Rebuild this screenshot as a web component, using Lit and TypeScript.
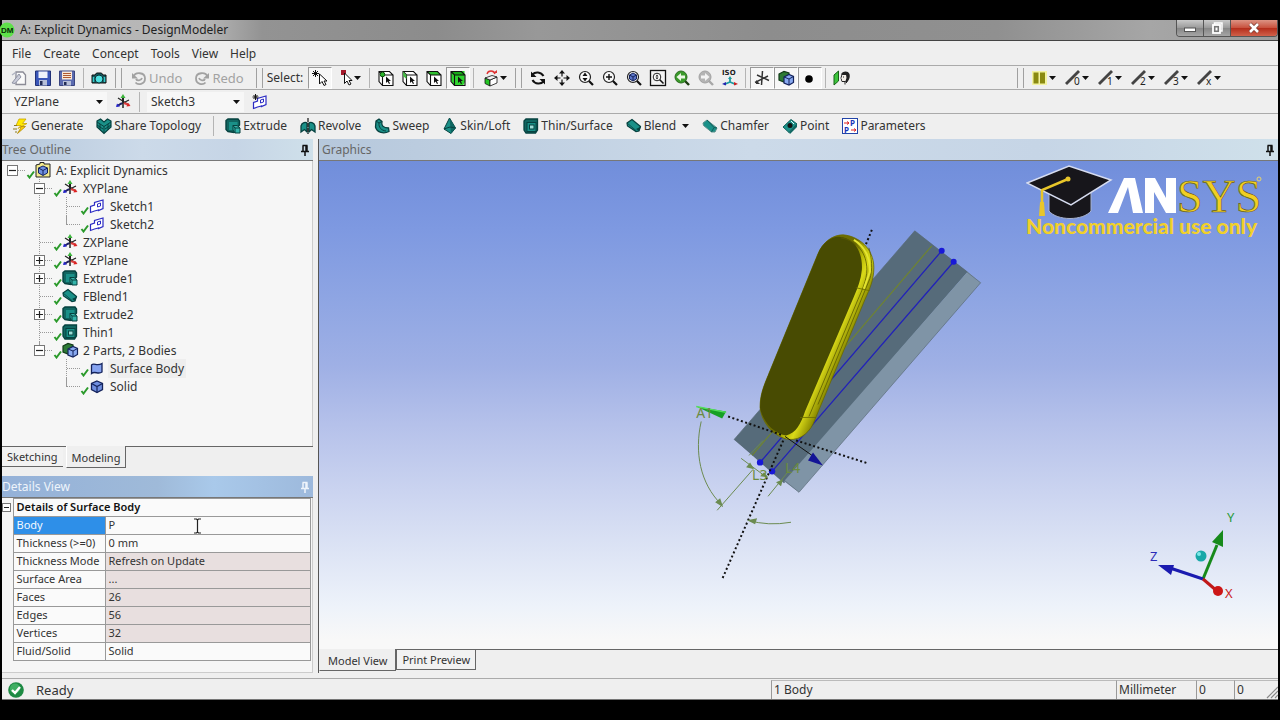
import { LitElement, html, svg, css, nothing } from "lit";
import type { SVGTemplateResult, TemplateResult } from "lit";
import { customElement, state } from "lit/decorators.js";
import { classMap } from "lit/directives/class-map.js";

const T = "#1a9088";
const D = "#06413f";

const sketchShape = svg`<path d="M1.500 14.500V8.500L5.500 7V4.500L14 2V10.500L9.500 12.500V12L5.500 13Z" fill="#fff" stroke="#2b2bc4" stroke-width="1.200"/><path d="M8.500 6L11.500 5V8L8.500 9Z" fill="none" stroke="#2b2bc4"/>`;
const axes = svg`<path d="M3 4L14 11M2 12L14 6" stroke="#222" stroke-width="1.200"/><path d="M8 8.500V3" stroke="#222" stroke-width="2"/><path d="M8 0L10.500 4H5.500Z" fill="#3cb43c"/><path d="M8 8V14" stroke="#222" stroke-width="1.500"/><path d="M9 9L14 11" stroke="#d44" stroke-width="2.200"/><path d="M15.500 12L11.500 12.500L13 9Z" fill="#d22"/><path d="M7 9L3 11.500" stroke="#226" stroke-width="2"/><path d="M1 13L2 9.500L5 12.500Z" fill="#22c"/>`;
const lens = (inner: SVGTemplateResult) => svg`<path d="M10.500 10.500L15 15" stroke="#111" stroke-width="2.200"/><circle cx="7" cy="7" r="5.500" fill="#f8f8f8" stroke="#222" stroke-width="1.200"/>${inner}`;
const wireCube = (extra: SVGTemplateResult, top = "#fff", front = "#fff") => svg`<path d="M1 2L5 1H14.500L15 12L13 15.500H4L1 11Z" fill="${front}"/><path d="M1 1.500L4.500 5H15L11.500 1.500Z" fill="${top}"/><path d="M1 1.500H11.500L15 5V15.500H4.500L1 11.500ZM1 1.500L4.500 5H15M4.500 5V15.500" fill="none" stroke="#111" stroke-width="1.100"/>${extra}<path d="M8 6.500V13L9.600 11.500L11 14L12 13.500L10.800 11H13Z" fill="#111"/>`;
const line = (n: string) => svg`<path d="M1 14L14 1" stroke="#444" stroke-width="2.800"/><text x="9" y="15" font-size="10" font-family="Noto Sans" fill="#222">${n}</text>`;
const blueCube = svg`<path d="M8 3L13.500 5.500V11.500L8 14.500L2.500 11.500V5.500Z" fill="#6f8fe0" stroke="#14235c" stroke-width="1.300"/><path d="M2.500 5.500L8 8.500L13.500 5.500M8 8.500V14.500" fill="none" stroke="#14235c" stroke-width="1.200"/>`;
const blend = svg`<path d="M1 5L6 1.500L14.500 8.500L13 13L10 13.500L1.500 8Z" fill="${T}" stroke="${D}" stroke-width="1.200"/><path d="M1 5L10 12.500" stroke="${D}" stroke-width=".8"/><path d="M13 13L15 8.500L10 11Z" fill="${D}"/>`;

const icons: Record<string, SVGTemplateResult> = {
  axes,
  fresh: svg`<path d="M5 2H12L14.500 5V14.500H5Z" fill="#fafafa" stroke="#8b8b96" stroke-width="1.300"/><path d="M1 13L8 4L10 7L4 13.500Z" fill="#c9cbd8" stroke="#9094a5" stroke-width="1"/><path d="M1 5L4 3L6 5" fill="none" stroke="#b2b5c2" stroke-width="1.500"/>`,
  save: svg`<path d="M.5 1H15.500V15.500H.5Z" fill="#3a56b8" stroke="#223277"/><rect x="3.500" y="1.500" width="9" height="6.500" fill="#eef2fb"/><rect x="4" y="10" width="8" height="5.500" fill="#b6bfd8"/><rect x="5" y="11" width="2.500" height="4" fill="#222c55"/>`,
  saveAs: svg`<path d="M.5 1H15.500V15.500H.5Z" fill="#5b6bb0" stroke="#3a4580"/><rect x="3" y="1.500" width="10" height="8" fill="#fbe9d8"/><path d="M4 3.500H12M4 5.500H12M4 7.500H12" stroke="#b05a32"/><rect x="4" y="11" width="8" height="4.500" fill="#b6bfd8"/><rect x="5" y="12" width="2.500" height="3" fill="#222c55"/>`,
  camera: svg`<path d="M1 5H4L5.500 3H10.500L12 5H15V13H1Z" fill="#14595f" stroke="#111"/><path d="M2.500 7V12M13.500 7V12" stroke="#36c9c9" stroke-width="1.500"/><circle cx="8" cy="9" r="4" fill="#4fe0e0" stroke="#0c3033"/>`,
  undo: svg`<path d="M2.500 7C4 1.500 14 2 14 8.500C14 14.500 7 15.500 4.500 12.500M11 8C10 11 6 11 5 9" fill="none" stroke="#a2a2a2" stroke-width="1.800"/><path d="M1 3V8.500H7Z" fill="#a2a2a2"/>`,
  redo: svg`<path d="M13.500 7C12 1.500 2 2 2 8.500C2 14.500 9 15.500 11.500 12.500M5 8C6 11 10 11 11 9" fill="none" stroke="#a2a2a2" stroke-width="1.800"/><path d="M15 3V8.500H9Z" fill="#a2a2a2"/>`,
  select: svg`<path d="M3.500 0V7M0 3.500H7M1 1L6 6M6 1L1 6" stroke="#111" stroke-width="1"/><path d="M7.500 4V14L10 11.500L12 15.500L14 14.500L12 11H15Z" fill="#fff" stroke="#111"/>`,
  selectBox: svg`<g transform="translate(4 0)"><rect x="0" y="0" width="5" height="5" fill="#a3182a"/><path d="M3.500 3V13.500L6 11L8 15L10 14L8 10.500H11Z" fill="#fff" stroke="#111"/></g>`,
  pickPoint: wireCube(svg`<circle cx="4.500" cy="4.500" r="2.300" fill="#2bb52b" stroke="#0b4e0b"/>`),
  pickEdge: wireCube(svg`<path d="M1 1.500L4.500 5V9L1 6Z" fill="#48b848"/>`),
  pickFace: wireCube(svg``, "#2fc02f"),
  pickBody: wireCube(svg``, "#18a818", "#2fd52f"),
  extend: svg`<path d="M2 8L7 10V16L2 13.500Z" fill="#23c423" stroke="#111" stroke-width=".8"/><path d="M7 10L14 7V13L7 16Z" fill="#fff" stroke="#111" stroke-width=".8"/><path d="M2 8L9 5.500L14 7L7 10Z" fill="#f4f4f4" stroke="#111" stroke-width=".8"/><path d="M4 4C5 0 11 0 12 4" fill="none" stroke="#d33" stroke-width="1.300"/><path d="M10 3H14V0Z" fill="#d33"/>`,
  rotate: svg`<path d="M13.500 6C11 1.500 5 1.500 2.500 4.500M2.500 10C5 14.500 11 14.500 13.500 11.500" fill="none" stroke="#111" stroke-width="2"/><path d="M1 1.500V7H6.500ZM15 14.500V9H9.500Z" fill="#111"/>`,
  pan: svg`<path d="M8 3V6.500M8 9.500V13M3 8H6.500M9.500 8H13" stroke="#111" stroke-width="1.200"/><path d="M8 0L11 3.500H5ZM8 16L5 12.500H11ZM0 8L3.500 5V11ZM16 8L12.500 11V5Z" fill="#111"/>`,
  zoom: lens(svg`<path d="M7 2.500L9.500 6H4.500ZM7 11.500L4.500 8H9.500Z" fill="#111"/>`),
  zoomIn: lens(svg`<path d="M7 4V10M4 7H10" stroke="#111" stroke-width="1.400"/>`),
  zoomFit: lens(svg`<path d="M7 3L10.500 5V9L7 11L3.500 9V5Z" fill="#5a74c8" stroke="#14235c"/><path d="M3.500 5L7 7L10.500 5M7 7V11" fill="none" stroke="#14235c"/>`),
  magnifier: svg`<rect x=".5" y=".5" width="15" height="15" fill="#f4f4f4" stroke="#111" stroke-width="1.300"/><path d="M9.500 9.500L13.500 13.500" stroke="#111" stroke-width="1.600"/><circle cx="7" cy="7" r="3.800" fill="#fff" stroke="#222"/><path d="M7 4.500L8.500 6.500H5.500ZM7 9.500L5.500 7.500H8.500Z" fill="#111"/>`,
  prevView: svg`<path d="M10.500 10.500L15 15" stroke="#1c3a10" stroke-width="2.400"/><circle cx="7" cy="7" r="6" fill="#3a9a2a" stroke="#2b6b20"/><path d="M2.500 7L7 3V5.500H11V8.500H7V11Z" fill="#eaf7e4"/>`,
  nextView: svg`<path d="M10.500 10.500L15 15" stroke="#a8a8a8" stroke-width="2.400"/><circle cx="7" cy="7" r="6" fill="#b4b4b4" stroke="#a2a2a2"/><path d="M11.500 7L7 3V5.500H3V8.500H7V11Z" fill="#f4f4f4"/>`,
  iso: svg`<text x="0" y="5" font-size="7" font-weight="700" font-family="DejaVu Sans" fill="#222">ISO</text><path d="M8 8V12M8 12L2 14.500M8 12L14 14.500" stroke="#1a9aa0" stroke-width="1.800"/><path d="M8 6L10 9H6Z" fill="#1a9aa0"/><path d="M0 14L4 12V15.500Z" fill="#2222b0"/><path d="M16 14L12 12V15.500Z" fill="#c22"/>`,
  showAxes: svg`<path d="M8.500 1L7.500 15M1 12.500L14 6M3 5L15 10.500" stroke="#333" stroke-width="1.500"/><path d="M2 10V14H6Z" fill="#333"/>`,
  model: svg`<path d="M1 4L6 1.500L11 3V9L6 12L1 10Z" fill="#2d7a35" stroke="#123a18" stroke-width="1.200"/><path d="M6 7L11 4.500L15.500 6.500V12.500L11 15L6 13Z" fill="#88a9f0" stroke="#14235c" stroke-width="1.200"/><path d="M6 7L11 9L15.500 6.500M11 9V15" fill="none" stroke="#14235c"/>`,
  dot: svg`<circle cx="7" cy="9" r="3.800" fill="#000"/>`,
  lookAt: svg`<path d="M0 5L4.500 1V11L0 15Z" fill="#3cc43c" stroke="#176017"/><path d="M7 4.500C8 1 14 0 15.500 4C16.500 8 14.500 10 13.500 12L11 12C12.500 9 12.500 7 12 5L10 5.500Z" fill="#222"/><path d="M8 4.500L7 8L8 11.500L11 11.500V14.500M12 5C13 8 12 9 12.500 13" fill="none" stroke="#222"/><path d="M8.500 5L12 5L12.500 8L11 11H8.500L7.500 8.500Z" fill="#f4efe9"/><path d="M9 7H10" stroke="#222"/>`,
  pause: svg`<rect x="0" y="1" width="15" height="14" fill="#f3f3a0"/><path d="M1.500 2.500H6.500V13.500H1.500ZM8 2.500H13V13.500H8Z" fill="#8a8a10"/>`,
  line0: line("0"), line1: line("1"), line2: line("2"), line3: line("3"), lineX: line("x"),
  sketch: sketchShape,
  newSketch: svg`${sketchShape}<path d="M3.500 0V6M0.500 3H6.500M1.500 1L5.500 5M5.500 1L1.500 5" stroke="#111" stroke-width="1"/>`,
  generate: svg`<path d="M6 1H13L9.500 5.500H14L5 10.500L8 7.500H3Z" fill="#ffe800" stroke="#c9a400" stroke-width=".8"/><path d="M8 8.500H12.500L4.500 15.500L7.500 10.500Z" fill="#ffd000" stroke="#b08800" stroke-width=".8"/><path d="M1 7.500H4M0 11H4M2 14H4" stroke="#8a7a20"/>`,
  share: svg`<path d="M1 3L4.500 1L8 4L11.500 1L15 3V9L8 15.500L1 9Z" fill="${T}" stroke="${D}" stroke-width="1.200"/><path d="M1 4L8 8.500L15 4M8 8.500V15M4 6V11.500M12 6V11.500M1 7L7 11M15 7L9 11" fill="none" stroke="${D}"/>`,
  extrude: svg`<path d="M1 2.500L3 1H13L14.500 3V7L9 14.500L3 13.500L1 11.500Z" fill="#116661" stroke="${D}" stroke-width="1.400"/><path d="M4 4H12.500V12H4Z" fill="${T}"/><path d="M8 7.500H12L15 10V15H10L8 12Z" fill="#35b5ab" stroke="${D}" stroke-width="1"/><path d="M10 10H15M10 10V15M8 7.500L10 10" stroke="${D}" fill="none"/>`,
  revolve: svg`<path d="M1 8C2 4 6 4 7 5V14L4.500 11.500L1 14Z" fill="${T}" stroke="${D}" stroke-width="1.300"/><path d="M15 8C14 4 10 4 9 5V14L11.500 11.500L15 14Z" fill="${T}" stroke="${D}" stroke-width="1.300"/><path d="M8 0V16" stroke="#111" stroke-width="1.200" stroke-dasharray="4 1"/>`,
  sweep: svg`<path d="M2 3L5 1L8 3.500C7 7 9 10 14.500 10L15 13.500C10 16 3 15 1.500 9Z" fill="${T}" stroke="${D}" stroke-width="1.300"/><path d="M2 3L5 5L8 3.500M5 5C4.500 9 7 12.500 12 13" fill="none" stroke="${D}"/>`,
  loft: svg`<path d="M7.500 0L13.500 10L9 15.500L2 11Z" fill="${T}" stroke="${D}"/><path d="M7.500 0L9 15.500L13.500 10Z" fill="#0d6661"/><path d="M2 11L8 9L13.500 10" fill="none" stroke="${D}"/>`,
  thin: svg`<path d="M1 3L3 1H14.500V12L12.500 15H3L1 12Z" fill="#116661" stroke="${D}" stroke-width="1.300"/><rect x="4" y="4.500" width="9" height="9" fill="${T}" stroke="${D}"/><rect x="6.500" y="7" width="4.500" height="4" fill="#9adfd8" stroke="${D}"/>`,
  blend,
  chamfer: svg`<path d="M1 5L5 2L15 10L13 14H9.500L1.500 7.500Z" fill="${T}" stroke="#5b8f8b"/><path d="M5 2L12 9.500L9.500 14M12 9.500L15 10" fill="none" stroke="#0f5e59"/>`,
  point: svg`<path d="M1 9L9 1.500L15 6L7 14.500Z" fill="${T}" stroke="#0f5e59"/><path d="M7 14.500L15 6V9L8 16Z" fill="#0d6661"/><circle cx="8" cy="7.500" r="2.500" fill="#111"/><path d="M9 3L12 6" stroke="#dff" />`,
  params: svg`<rect x=".5" y=".5" width="15" height="15" fill="#fff" stroke="#2244a8"/><text x="8" y="8" font-size="8" font-weight="700" font-family="Noto Sans" fill="#1736b8">P</text><text x="2" y="15" font-size="8" font-weight="700" font-family="Noto Sans" fill="#1736b8">P</text><path d="M2 5H7M5 3.500L7 5L5 6.500M9 12H14M12 10.500L14 12L12 13.500" fill="none" stroke="#d22"/>`,
  pin: svg`<path d="M5.500 3.500H10.500M6 3.500V9.500M10 3.500V9.500M9 4V9M4 9.500H12M8 10V14" fill="none" stroke="currentColor" stroke-width="1.500"/>`,
  project: svg`<path d="M1 3L5 2V.5H9V2H15V15H1Z" fill="#f3ea8c" stroke="#222"/><path d="M8 4L12.500 6V11L8 13.500L3.500 11V6Z" fill="#6f8fe0" stroke="#14235c"/><path d="M3.500 6L8 8.500L12.500 6M8 8.500V13" fill="none" stroke="#14235c"/>`,
  surface: svg`<path d="M2.500 5C5 2.500 8 6.500 13 3.500V12C9 15 6 10.500 2.500 13.500Z" fill="#86a3f0" stroke="#14235c" stroke-width="1.300"/>`,
  solid: blueCube,
  ok: svg`<circle cx="8" cy="8" r="7.800" fill="#1d8a43"/><circle cx="7" cy="6.500" r="5" fill="#3fae62"/><path d="M4 8L7 11L12 5" fill="none" stroke="#fff" stroke-width="2.400"/>`,
  app: svg`<circle cx="5" cy="8" r="7.500" fill="#5fe04a"/><text x="-1" y="11" font-size="8" font-weight="700" font-family="Liberation Sans" fill="#062a06">DM</text>`,
};
const icon = (name: string) => html`<svg class="icon" viewBox="0 0 16 16" width="16" height="16" aria-hidden="true">${icons[name]}</svg>`;
const arrow = html`<svg class="arrow" viewBox="0 0 7 4" width="7" height="4" aria-hidden="true"><path d="M0 0H7L3.500 4Z" fill="#111"/></svg>`;

interface TreeNode { label: string; icon: string; open?: boolean; current?: boolean; children?: TreeNode[] }
const outline: TreeNode = {
  label: "A: Explicit Dynamics", icon: "project", open: true, children: [
    { label: "XYPlane", icon: "axes", open: true, children: [
      { label: "Sketch1", icon: "sketch" }, { label: "Sketch2", icon: "sketch" } ] },
    { label: "ZXPlane", icon: "axes" },
    { label: "YZPlane", icon: "axes", open: false },
    { label: "Extrude1", icon: "extrude", open: false },
    { label: "FBlend1", icon: "blend" },
    { label: "Extrude2", icon: "extrude", open: false },
    { label: "Thin1", icon: "thin" },
    { label: "2 Parts, 2 Bodies", icon: "model", open: true, children: [
      { label: "Surface Body", icon: "surface", current: true }, { label: "Solid", icon: "solid" } ] },
  ],
};

const details: [string, string, boolean][] = [
  ["Thickness (>=0)", "0 mm", false],
  ["Thickness Mode", "Refresh on Update", true],
  ["Surface Area", "...", true],
  ["Faces", "26", true],
  ["Edges", "56", true],
  ["Vertices", "32", true],
  ["Fluid/Solid", "Solid", false],
];

@customElement("app-root")
export class AppRoot extends LitElement {
  @state() private bodyName = "P";

  static styles = css`
    :host { display: flex; flex-direction: column; box-sizing: border-box; min-height: 100vh; padding: 20px 2px; background: #000; color: #333; font: 12px/18px "Noto Sans", "Open Sans", sans-serif; }
    * { box-sizing: border-box; }
    button, input, select { font: inherit; color: inherit; margin: 0; padding: 0; border: 0; background: none; }
    svg { display: block; flex: none; }
    .icon { overflow: visible; }
    .window { flex: 1; display: flex; flex-direction: column; background: #efefef; min-width: 0; }

    .title { display: flex; align-items: center; height: 21px; border-bottom: 1px solid #444; background: linear-gradient(90deg, #b4b4b4, #b8b8b8 200px, #939393 260px, #8c8c8c 34%, #989898 42%, #8d8d8d 60%, #909090 78%, #a6a6a6 90%, #9b9b9b); color: #222; }
    .title h1 { margin: 0 auto 0 2px; font: inherit; }
    .controls { display: flex; align-self: flex-start; height: 17px; border: 1px solid #555; border-top: 0; border-radius: 0 0 4px 4px; overflow: hidden; }
    .controls button { display: grid; place-items: center; width: 27px; background: linear-gradient(#c9c9c9, #999 50%, #858585 50%, #a5a5a5); border-right: 1px solid #555; }
    .controls .close { width: 46px; border: 0; background: linear-gradient(#dc9484, #c8503c 50%, #b32c1a 50%, #d0604a); }

    .menu { display: flex; align-items: center; gap: 12px; height: 25px; padding: 1px 0 0 10px; border-bottom: 1px solid #aaa; }
    .bar { display: flex; align-items: center; height: 24px; border-bottom: 1px solid #aaa; }
    .bar.last { border-bottom: 0; }
    .tool { display: flex; align-items: center; justify-content: center; width: 24px; height: 24px; }
    .tool.menuTool { width: 33px; gap: 1px; }
    .tool.wide { width: 34px; gap: 1px; }
    .tool.on { height: 22px; background: #f7f7f7; border: 1px solid #999; border-right-color: #fff; border-bottom-color: #fff; }
    .text { display: flex; align-items: center; gap: 2px; }
    .text[disabled] { color: #a2a2a2; }
    .sep { width: 8px; height: 20px; display: flex; justify-content: center; }
    .sep::before { content: ""; width: 1px; background: #b4b4b4; }
    .grip { width: 14px; height: 20px; display: flex; gap: 5px; justify-content: center; }
    .grip::before, .grip::after { content: ""; width: 1px; background: #a0a0a0; }
    .push { margin-left: auto; margin-right: 53px; display: flex; align-items: center; }
    .history { gap: 12px; display: flex; padding: 0 9px 0 6px; font-size: 13px; }
    .start { padding-left: 5px; }
    .caption { width: 41px; }
    .combo { display: grid; grid-template-columns: 1fr auto; align-items: center; width: 97px; height: 20px; margin-right: 4px; background: #f7f7f7; }
    .combo select { appearance: none; grid-area: 1 / 1 / 2 / 3; width: 100%; height: 18px; outline: 0; padding-left: 4px; }
    .combo .arrow { grid-area: 1 / 2; margin-right: 4px; pointer-events: none; }
    .planes { padding-left: 8px; }
    .planes .sep { margin-right: 4px; }
    .features { padding-left: 11px; gap: 8px; }
    .group { display: flex; align-items: center; gap: 13px; }
    .features .arrow { margin-left: 4px; }

    .work { flex: 1; display: grid; grid-template-columns: 311px minmax(0, 1fr); column-gap: 5px; min-height: 0; padding: 1px 0 5px; }
    .left { display: flex; flex-direction: column; min-height: 0; }
    .panelHead { display: flex; align-items: center; justify-content: space-between; height: 22px; color: #666; background: linear-gradient(90deg, #b6c8dc, #ccdae9 45%, #c6d5e6 75%, #cfe0ea); border-bottom: 1px solid #777; }
    .panelHead h2 { margin: 0; font: inherit; }
    .panelHead button { color: #111; }
    .panelHead.active { color: #eef4fb; background: linear-gradient(90deg, #94b1d8, #9fbad9 50%, #a9c9ea 68%, #9db9dc); }
    .panelHead.active button { color: #eef4fb; }
    .tree { flex: 1; background: #f6f6f6; border-right: 1px solid #ccc; padding: 0 0 0 5px; }
    .tree ul { list-style: none; margin: 0; padding: 0; }
    .tree ul ul { padding-left: 27px; }
    .tree ul ul li { background: linear-gradient(#999 50%, transparent 50%) 5px 0 / 1px 2px repeat-y; }
    .tree ul ul li:last-child { background: none; }
    .tree ul ul li:last-child > .node { background: linear-gradient(#999, #999) 5px 0 / 1px 10px no-repeat; }
    .node { display: flex; align-items: center; height: 18px; }
    .fold { width: 11px; height: 11px; background: #fff; border: 1px solid #777; display: grid; place-items: center; }
    .dots { width: 8px; height: 1px; background: linear-gradient(90deg, #999 50%, transparent 50%) 0 0 / 2px 1px; }
    .dots.leaf { width: 13px; margin-left: 6px; }
    .node .check { align-self: flex-end; }
    .label { margin-left: 3px; padding: 1px 2px 0; }
    .label.current { background: #eee; }

    .tabs { display: flex; align-items: flex-start; height: 24px; border-top: 1px solid #666; font-size: 11px; }
    .tabs button { height: 20px; padding: 0 5px; border: 1px solid #666; border-top: 0; background: #f2f2f2; }
    .tabs button.active { height: 22px; padding-top: 2px; margin-top: -1px; background: #efefef; border-left-color: #efefef; }
    .left .tabs { height: 30px; }
    .left .tabs button:first-child { border-left: 0; border-right: 0; margin-right: 3px; }
    .left .tabs button.active { border-left-color: #fff; }
    .right .tabs button.active { padding: 2px 8px 0; }

    .details { padding: 0 1px 11px 0; background: #f6f6f6; border-right: 1px solid #ccc; border-bottom: 1px solid #ccc; }
    .details table { width: 100%; border-collapse: collapse; table-layout: fixed; font-size: 11px; }
    .details .gutter { width: 11px; }
    .details .name { width: 92px; }
    .details th, .details td { height: 18px; padding: 0 3px 1px; text-align: left; font-weight: 400; line-height: 16px; white-space: nowrap; border: 1px solid #999; background: #fafafa; }
    .details .fixed { background: #e8dfdf; }
    .details .side { border: 0; padding: 4px 0 0; vertical-align: top; background: #f6f6f6; }
    .details .heading { font-weight: 600; color: #111; }
    .details .picked { background: #2e8fe8; color: #f2f8ff; }
    .details input { display: block; width: 100%; height: 16px; outline: 0; }
    .details .field { position: relative; }
    .beam { position: absolute; left: 87px; top: 1px; }
    .details .fold { width: 9px; height: 9px; }

    .right { display: flex; flex-direction: column; min-height: 0; min-width: 0; border-left: 1px solid #555; }
    .right .panelHead { padding-left: 3px; }
    .view { flex: 1; position: relative; min-height: 0; background: linear-gradient(#718edb, #7e99e1 14%, #8ea5e3 28%, #9fb0e5 42%, #b5c1ea 54%, #cbd4f0 68%, #dde4f5 80%, #edf2fa 91%, #f8f8f8 98%); }
    .view svg { position: absolute; }
    .scene { inset: 0; width: 100%; height: 100%; }
    .logo { top: 3px; right: 16px; }
    .triad { right: 40px; bottom: 45px; }

    .status { display: grid; grid-template-columns: 769fr 345fr 80px 38px 44px; height: 22px; border-top: 1px solid #aaa; border-bottom: 1px solid #777; padding-top: 1px; }
    .status > div { display: flex; align-items: center; border-left: 1px solid #999; border-top: 1px solid #bbb; padding-left: 2px; }
    .status > div:first-child { border: 0; padding-left: 6px; gap: 12px; font-size: 13px; }
    .status .end { justify-content: space-between; }
  `;

  private tool(name: string, label: string, cls: Record<string, boolean> = {}) {
    const drop = cls.menuTool || cls.wide;
    return html`<button class=${classMap({ tool: true, ...cls })} aria-label=${label}>${icon(name)}${drop ? arrow : nothing}</button>`;
  }

  private node(n: TreeNode): TemplateResult {
    return html`<li>
      <div class="node">
        ${n.open === undefined
          ? html`<span class="dots leaf"></span>`
          : html`<button class="fold" aria-label="Toggle ${n.label}">
              <svg viewBox="0 0 9 9" width="9" height="9"><path d=${n.open ? "M1 4.500H8" : "M1 4.500H8M4.500 1V8"} stroke="#222" stroke-width="1.200" fill="none"/></svg>
            </button><span class="dots"></span>`}
        <svg class="check" viewBox="0 0 9 9" width="9" height="9"><path d="M1.500 5L3.500 7.500L8 1.500" fill="none" stroke="#2b9a2b" stroke-width="2"/></svg>
        ${icon(n.icon)}
        <span class=${classMap({ label: true, current: !!n.current })}>${n.label}</span>
      </div>
      ${n.children ? html`<ul>${n.children.map((c) => this.node(c))}</ul>` : nothing}
    </li>`;
  }

  private scene() {
    return html`<svg class="scene" viewBox="319 161 959 489" role="img" aria-label="Model geometry">
      <defs>
        <linearGradient id="rim" gradientUnits="userSpaceOnUse" x1="818" y1="330" x2="848" y2="343">
          <stop offset="0" stop-color="#6d6d00"/><stop offset=".35" stop-color="#b9b908"/><stop offset=".6" stop-color="#dada18"/><stop offset="1" stop-color="#8b8b00"/>
        </linearGradient>
      </defs>
      <path d="M915 231L968 272L784 484L734 440Z" fill="#566b7a"/>
      <path d="M968 272L981 283L799 493L784 482Z" fill="#7f94a6"/>
      <path d="M915 231L981 283L799 493L734 440Z" fill="none" stroke="#5a6a78" stroke-width=".7"/>
      <path d="M932 246L752 456" stroke="#6f8430" stroke-width="1.200"/>
      <path d="M942 251L760 463M954 262L772 472" stroke="#2222b8" stroke-width="1.300"/>
      <g fill="#1818d8"><circle cx="942" cy="251" r="3"/><circle cx="954" cy="262" r="3"/><circle cx="760" cy="463" r="3.200"/><circle cx="772" cy="472" r="3.200"/></g>
      <path d="M872 230L865 247M785 437L722 580" stroke="#111" stroke-width="2" stroke-dasharray="2 2.500"/>
      <path d="M843 235C858 236 874 248 874 268C874 280 870 289 865 300L815 420C811 432 801 441 789 440C775 438 762 425 760 408C760 396 763 388 768 376L818 254C823 242 833 235 843 235Z" fill="url(#rim)" stroke="#6a6a00" stroke-width=".8"/>
      <path d="M839 237C855 238 863 253 862 270C861 280 858 288 854 297L805 412C801 424 796 434 786 436C772 434 762 420 760 408C760 396 763 388 768 376L818 254C822 244 830 237 839 237Z" fill="#484b02"/>
      <path d="M841 238C858 241 867 254 867 270C867 280 862 291 858 300L809 417M869 248C872 258 873 270 870 279L818 405" fill="none" stroke="#5c5c00" stroke-width=".8"/>
      <path d="M854 240C864 246 871 258 870 272L864 289" fill="none" stroke="#e4e430" stroke-width="2"/>
      <path d="M856 288L870 291M800 418L816 418" stroke="#6b6b00" stroke-width=".8"/>
      <path d="M728 417L783 436M796 441L868 464" stroke="#111" stroke-width="2" stroke-dasharray="2 2.500"/>
      <path d="M785 437L812 456" stroke="#111"/>
      <path d="M823 466L808 461L813 453Z" fill="#141496"/>
      <path d="M696 407L726 412L722 419Z" fill="#15a025"/><path d="M696 407L726 413" stroke="#53df5c" stroke-width="1.300"/>
      <g fill="none" stroke="#6b8b50"><path d="M701 422C694 453 700 484 721 505M717 511L753 470M741 459L768 479M768 497L790 470M748 521Q768 527 791 523M749 456L763 441"/></g>
      <g fill="#6b8b50"><path d="M723 508L715 503L720 499ZM754 470L746 468L750 463ZM783 480L781 487L776 483ZM747 521L757 519L755 525ZM768 478L760 477L764 473Z"/></g>
      <g font-family="Noto Sans" font-size="14" fill="#6b8b40"><text x="696" y="419">A1</text><text x="752" y="481">L3</text><text x="785" y="474">L4</text></g>
    </svg>
    <svg class="logo" viewBox="0 0 236 76" width="236" height="76" role="img" aria-label="ANSYS Noncommercial use only">
      <path d="M23 24V47C31 57 57 57 65 47V24Z" fill="#17161b" stroke="#a9b4d0"/>
      <path d="M1 19L43 2L85 16L45 41Z" fill="#17161b" stroke="#d6dcf0" stroke-width="1.500"/>
      <path d="M42 15L16 26V50" fill="none" stroke="#e8c62a" stroke-width="2.500"/><circle cx="42" cy="15" r="2.500" fill="#e8c62a"/><path d="M14 38H18L19 52H13Z" fill="#e8c62a"/>
      <path d="M82 49L98 14H109L117 49H107L102 23L92 49Z" fill="#fff"/>
      <path d="M119 49V14H129L140 34V14H150V49H140L128 28V49Z" fill="#fff"/>
      <text x="151" y="48" font-family="Liberation Serif" font-size="46" fill="#f1cf22" stroke="#67601e" stroke-width=".7">SYS</text>
      <circle cx="233" cy="15" r="2" fill="none" stroke="#e8d46a"/>
      <text x="0" y="70" font-family="Lato" font-weight="900" font-size="21" fill="#f1d02a">Noncommercial use only</text>
    </svg>
    <svg class="triad" viewBox="0 0 90 96" width="90" height="96" role="img" aria-label="Axis triad">
      <path d="M55 71L69 37" stroke="#178a1b" stroke-width="3"/><path d="M75 22L75 39L64 34Z" fill="#178a1b"/>
      <path d="M55 71L22 60" stroke="#1b1bb0" stroke-width="3"/><path d="M10 57L26 57L23 67Z" fill="#1b1bb0"/>
      <path d="M55 71L69 83" stroke="#c01818" stroke-width="3"/><circle cx="70" cy="83" r="5" fill="#cc1616"/>
      <circle cx="53" cy="48" r="5.500" fill="#18a8a8"/><circle cx="51" cy="46" r="2" fill="#7ce8e8"/>
      <g font-family="Noto Sans" font-size="13"><text x="79" y="14" fill="#2b9a3b">Y</text><text x="2" y="53" fill="#2b2bb8">Z</text><text x="77" y="90" fill="#cc2222">X</text></g>
    </svg>`;
  }

  render() {
    const features: [string, string][] = [["extrude", "Extrude"], ["revolve", "Revolve"], ["sweep", "Sweep"], ["loft", "Skin/Loft"], ["thin", "Thin/Surface"], ["blend", "Blend"], ["chamfer", "Chamfer"], ["point", "Point"], ["params", "Parameters"]];
    return html`<div class="window">
      <header class="title">
        ${icon("app")}<h1>A: Explicit Dynamics - DesignModeler</h1>
        <div class="controls">
          <button aria-label="Minimize"><svg viewBox="0 0 14 12" width="14" height="12"><rect x="1.500" y="6" width="11" height="3.500" fill="#fff" stroke="#555"/></svg></button>
          <button aria-label="Restore"><svg viewBox="0 0 14 12" width="14" height="12"><path d="M4.500 3V1H12V9H10" fill="none" stroke="#fff" stroke-width="1.500"/><rect x="3" y="3" width="7" height="8" fill="#777" stroke="#fff" stroke-width="1.800"/><rect x="5.500" y="5.500" width="2" height="3" fill="#fff"/></svg></button>
          <button class="close" aria-label="Close"><svg viewBox="0 0 12 12" width="12" height="12"><path d="M2 2L10 10M10 2L2 10" stroke="#7a3a30" stroke-width="4"/><path d="M2 2L10 10M10 2L2 10" stroke="#fff" stroke-width="2.600"/></svg></button>
        </div>
      </header>
      <nav class="menu">${["File", "Create", "Concept", "Tools", "View", "Help"].map((m) => html`<button>${m}</button>`)}</nav>
      <div class="bar start">
        ${this.tool("fresh", "New")}${this.tool("save", "Save")}${this.tool("saveAs", "Save as")}
        <span class="sep"></span>${this.tool("camera", "Capture")}<span class="grip"></span>
        <div class="history">
          <button class="text" disabled>${icon("undo")}Undo</button>
          <button class="text" disabled>${icon("redo")}Redo</button>
        </div>
        <span class="grip"></span><span class="caption">Select:</span>
        ${this.tool("select", "New selection", { on: true })}${this.tool("selectBox", "Selection mode", { wide: true })}
        <span class="sep"></span>
        ${this.tool("pickPoint", "Points")}${this.tool("pickEdge", "Edges")}${this.tool("pickFace", "Faces")}${this.tool("pickBody", "Bodies", { on: true })}
        <span class="sep"></span>${this.tool("extend", "Extend", { wide: true })}<span class="grip"></span>
        ${this.tool("rotate", "Rotate")}${this.tool("pan", "Pan")}${this.tool("zoom", "Zoom")}${this.tool("zoomIn", "Box zoom")}${this.tool("zoomFit", "Zoom to fit")}${this.tool("magnifier", "Magnifier")}${this.tool("prevView", "Previous view")}${this.tool("nextView", "Next view")}${this.tool("iso", "Isometric view")}
        <span class="sep"></span>
        ${this.tool("showAxes", "Display plane", { on: true })}${this.tool("model", "Display model", { on: true })}${this.tool("dot", "Display points", { on: true })}
        <span class="sep"></span>${this.tool("lookAt", "Look at")}
        <div class="push"><span class="grip"></span>
          ${["pause", "line0", "line1", "line2", "line3", "lineX"].map((n) => this.tool(n, "Edge style " + n, { menuTool: true }))}
        </div>
      </div>
      <div class="bar planes">
        <label class="combo"><select aria-label="Active plane"><option>YZPlane</option></select>${arrow}</label>
        ${this.tool("axes", "New plane")}<span class="sep"></span>
        <label class="combo"><select aria-label="Active sketch"><option>Sketch3</option></select>${arrow}</label>
        ${this.tool("newSketch", "New sketch")}
      </div>
      <div class="bar last features">
        <div class="group">
          <button class="text">${icon("generate")}Generate</button>
          <button class="text">${icon("share")}Share Topology</button>
        </div>
        <span class="sep"></span>
        <div class="group">
          ${features.map(([i, l]) => html`<button class="text">${icon(i)}${l}${l === "Blend" ? arrow : nothing}</button>`)}
        </div>
      </div>
      <main class="work">
        <div class="left">
          <div class="panelHead"><h2>Tree Outline</h2><button aria-label="Pin tree">${icon("pin")}</button></div>
          <div class="tree"><ul>${this.node(outline)}</ul></div>
          <div class="tabs"><button>Sketching</button><button class="active">Modeling</button></div>
          <div class="panelHead active"><h2>Details View</h2><button aria-label="Pin details">${icon("pin")}</button></div>
          <div class="details">
            <table>
              <colgroup><col class="gutter"><col class="name"><col></colgroup>
              <tbody>
                <tr><td class="side" rowspan="9"><button class="fold" aria-label="Collapse group"><svg viewBox="0 0 7 7" width="7" height="7"><path d="M1 3.500H6" stroke="#222"/></svg></button></td><th class="heading" colspan="2">Details of Surface Body</th></tr>
                <tr><th class="picked" scope="row"><label for="body">Body</label></th>
                  <td class="field"><input id="body" .value=${this.bodyName} @input=${(e: Event) => (this.bodyName = (e.target as HTMLInputElement).value)}>
                    <svg class="beam" viewBox="0 0 9 16" width="9" height="16"><path d="M1 1H3.500L4.500 2L5.500 1H8M1 15H3.500L4.500 14L5.500 15H8M4.500 2V14" fill="none" stroke="#222" stroke-width="1.200"/></svg></td></tr>
                ${details.map(([k, v, fixed]) => html`<tr><th scope="row">${k}</th><td class=${classMap({ fixed })}>${v}</td></tr>`)}
              </tbody>
            </table>
          </div>
        </div>
        <div class="right">
          <div class="panelHead"><h2>Graphics</h2><button aria-label="Pin graphics">${icon("pin")}</button></div>
          <div class="view">${this.scene()}</div>
          <div class="tabs"><button class="active">Model View</button><button>Print Preview</button></div>
        </div>
      </main>
      <footer class="status">
        <div>${icon("ok")}Ready</div><div>1 Body</div><div>Millimeter</div><div>0</div>
        <div class="end">0<svg viewBox="0 0 12 18" width="12" height="18"><path d="M1 17L12 6M5 17L12 10M9 17L12 14" stroke="#888" stroke-width="1.200"/></svg></div>
      </footer>
    </div>`;
  }
}
